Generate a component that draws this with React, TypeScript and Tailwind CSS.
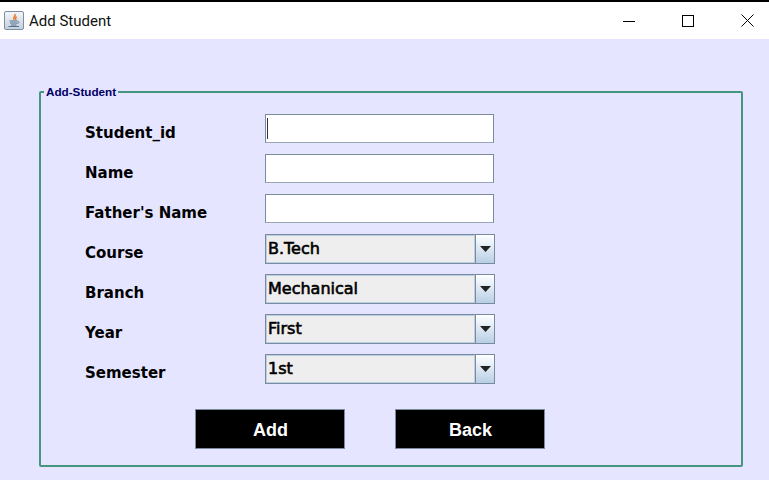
const labelFont = "font-['DejaVu_Sans',Tahoma,sans-serif]";

const textFields = ["Student_id", "Name", "Father's Name"];
const comboFields = [
  { label: "Course", value: "B.Tech" },
  { label: "Branch", value: "Mechanical" },
  { label: "Year", value: "First" },
  { label: "Semester", value: "1st" },
];

function JavaIcon() {
  return (
    <div className="flex h-[19px] w-[20px] items-center justify-center rounded-[2px] border border-[#7e8fa3] bg-gradient-to-b from-[#f3f6f9] to-[#c4d0dc]">
      <svg width="14" height="15" viewBox="0 0 14 15" fill="none">
        <path d="M8 1C9 3 5.500 4 7 7M9.500 3.500C8.500 4.500 8 5.500 9 7" stroke="#e8792b" strokeWidth="1.500" />
        <path d="M2.500 8H10.500M3 10H10M4 12H9.500M1.500 13.500H12" stroke="#50708f" strokeWidth="1" />
        <path d="M10.500 8.500C12.500 8 12.500 10.500 10 10.500" stroke="#50708f" strokeWidth="0.800" />
      </svg>
    </div>
  );
}

function TitleBar() {
  return (
    <div className="flex h-[37px] items-center bg-white pl-[4px]">
      <JavaIcon />
      <span className="ml-[5px] pt-[1px] font-['Roboto',sans-serif] text-[15px] text-[#111]">Add Student</span>
      <div className="ml-auto flex items-center gap-[15px]">
        <button className="flex h-[37px] w-[44px] items-center justify-center">
          <svg width="12" height="12" viewBox="0 0 12 12"><path d="M0 6.500H12" stroke="#000" /></svg>
        </button>
        <button className="flex h-[37px] w-[44px] items-center justify-center">
          <svg width="12" height="12" viewBox="0 0 12 12"><rect x="0.500" y="0.500" width="11" height="11" fill="none" stroke="#000" /></svg>
        </button>
        <button className="flex h-[37px] w-[44px] items-center justify-center">
          <svg width="13" height="13" viewBox="0 0 13 13"><path d="M0.500 0.500L12.500 12.500M12.500 0.500L0.500 12.500" stroke="#000" /></svg>
        </button>
      </div>
    </div>
  );
}

function TextRow({ label, focused }: { label: string; focused: boolean }) {
  return (
    <div className="flex h-[30px] items-start">
      <label className={`${labelFont} w-[180px] pt-[8px] text-[15px] leading-[22px] font-bold text-black`}>{label}</label>
      <div className="flex h-[29px] w-[229px] items-center border border-[#7a8a9f] border-b-[#9aa7b8] bg-white pl-[1px]">
        {focused && <div className="h-[21px] w-px bg-[#333]" />}
      </div>
    </div>
  );
}

function ComboRow({ label, value }: { label: string; value: string }) {
  return (
    <div className="flex h-[30px] items-start">
      <label className={`${labelFont} w-[180px] pt-[8px] text-[15px] leading-[22px] font-bold text-black`}>{label}</label>
      <div className="flex h-[30px] w-[230px] border border-[#7a8a9f] bg-[#eeeeee]">
        <div className={`${labelFont} flex-1 border border-[#b8cfe5] pt-[1px] pl-[1px] text-[16px] leading-[24px] text-black [-webkit-text-stroke:0.6px_black]`}>
          {value}
        </div>
        <div className="flex w-[19px] items-center justify-center border-l border-[#7a8a9f] bg-gradient-to-b from-white to-[#b8cfe5]">
          <svg width="11" height="6" viewBox="0 0 11 6"><path d="M0 0H11L5.500 6Z" fill="#222" /></svg>
        </div>
      </div>
    </div>
  );
}

export default function App() {
  return (
    <div className="flex h-[480px] w-[769px] flex-col overflow-hidden bg-[#e5e5ff]">
      <div className="h-[2px] bg-black" />
      <TitleBar />
      <main className="pt-[46px] pl-[39px]">
        <fieldset className="h-[382px] w-[704px] rounded-[2px] border-2 border-[#46957f]">
          <legend className="ml-[3px] px-[2px] font-['Liberation_Sans',Arial,sans-serif] text-[11.700px] leading-[14px] font-bold text-[#000066]">
            Add-Student
          </legend>
          <div className="flex flex-col gap-[10px] pt-[15px] pl-[44px]">
            {textFields.map((label, i) => (
              <TextRow key={label} label={label} focused={i === 0} />
            ))}
            {comboFields.map((f) => (
              <ComboRow key={f.label} label={f.label} value={f.value} />
            ))}
          </div>
          <div className="mt-[25px] flex gap-[50px] pl-[154px]">
            <button className="h-[40px] w-[150px] border border-[#7a8a9f] bg-black pt-[2px] pl-[1px] font-['Liberation_Sans',Arial,sans-serif] text-[18px] font-bold text-white">Add</button>
            <button className="h-[40px] w-[150px] border border-[#7a8a9f] bg-black pt-[2px] pl-[1px] font-['Liberation_Sans',Arial,sans-serif] text-[18px] font-bold text-white">Back</button>
          </div>
        </fieldset>
      </main>
    </div>
  );
}
